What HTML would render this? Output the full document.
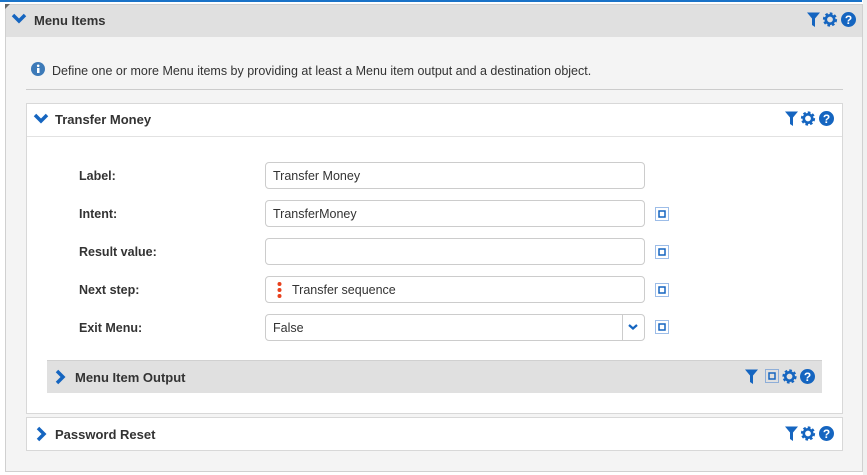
<!DOCTYPE html>
<html><head><meta charset="utf-8"><style>
*{box-sizing:border-box;margin:0;padding:0}
body{width:867px;height:475px;background:#fff;font-family:"Liberation Sans",sans-serif;position:relative;overflow:hidden;color:#333}
.a{position:absolute}
.lbl{position:absolute;left:79px;font-size:12.5px;font-weight:bold;color:#333}
.inp{position:absolute;left:265px;width:380px;height:27px;border:1px solid #ccc;border-radius:4px;background:#fff;font-size:12.5px;padding:6px 0 0 7px;color:#333}
.ico{position:absolute}
.hd{font-size:13px;font-weight:bold;color:#333;position:absolute}
</style></head><body>
<div class="a" style="left:0;top:0;width:862px;height:2px;background:#1a73c8"></div>
<div class="a" style="left:863px;top:0;width:4px;height:475px;background:#f0f0f0"></div>
<div class="a" style="left:5px;top:4px;width:858px;height:468px;border:1px solid #d0d0d0;background:#f4f4f4"></div>
<div class="a" style="left:6px;top:5px;width:856px;height:32px;background:#e0e0e0"></div>
<div class="a" style="left:5px;top:4px;width:0;height:0;border-top:5px solid #666;border-right:5px solid transparent"></div>
<svg class="ico" style="left:11px;top:13px" width="16" height="11" viewBox="0 0 16 11"><path d="M2 2 L8 8 L14 2" stroke="#1565c0" stroke-width="3.5" fill="none"/></svg>
<div class="hd" style="left:34px;top:13px">Menu Items</div>
<svg class="ico" style="left:807px;top:11px" width="50" height="17" viewBox="0 0 50 17"><path d="M0 1.5h13l-5 6v8.5l-3-2V7.5z" fill="#1565c0"/><g transform="translate(23 8.5)"><circle r="5.3" fill="none" stroke="#1565c0" stroke-width="3.6" stroke-dasharray="2.3 1.8"/><circle r="4.2" fill="none" stroke="#1565c0" stroke-width="2.6"/></g><circle cx="41.5" cy="8.5" r="7.5" fill="#1565c0"/><text x="41.5" y="12.8" font-size="12" font-weight="bold" fill="#fff" text-anchor="middle" font-family="Liberation Sans">?</text></svg>
<svg class="ico" style="left:31px;top:62px" width="14" height="14"><circle cx="7" cy="7" r="7" fill="#3d7ab8"/><rect x="6" y="6" width="2.5" height="5" fill="#fff"/><circle cx="7.2" cy="3.8" r="1.3" fill="#fff"/></svg>
<div class="a" style="left:52px;top:64px;font-size:12.5px;color:#333">Define one or more Menu items by providing at least a Menu item output and a destination object.</div>
<div class="a" style="left:26px;top:89px;width:817px;height:1px;background:#ccc"></div>
<div class="a" style="left:26px;top:103px;width:817px;height:311px;border:1px solid #d8d8d8;background:#fff"></div>
<div class="a" style="left:27px;top:136px;width:815px;height:1px;background:#e2e2e2"></div>
<svg class="ico" style="left:33px;top:113px" width="16" height="11" viewBox="0 0 16 11"><path d="M2 2 L8 8 L14 2" stroke="#1565c0" stroke-width="3.5" fill="none"/></svg>
<div class="hd" style="left:55px;top:112px">Transfer Money</div>
<svg class="ico" style="left:785px;top:110px" width="50" height="17" viewBox="0 0 50 17"><path d="M0 1.5h13l-5 6v8.5l-3-2V7.5z" fill="#1565c0"/><g transform="translate(23 8.5)"><circle r="5.3" fill="none" stroke="#1565c0" stroke-width="3.6" stroke-dasharray="2.3 1.8"/><circle r="4.2" fill="none" stroke="#1565c0" stroke-width="2.6"/></g><circle cx="41.5" cy="8.5" r="7.5" fill="#1565c0"/><text x="41.5" y="12.8" font-size="12" font-weight="bold" fill="#fff" text-anchor="middle" font-family="Liberation Sans">?</text></svg>
<div class="lbl" style="top:169px">Label:</div>
<div class="lbl" style="top:207px">Intent:</div>
<div class="lbl" style="top:245px">Result value:</div>
<div class="lbl" style="top:283px">Next step:</div>
<div class="lbl" style="top:321px">Exit Menu:</div>
<div class="inp" style="top:162px">Transfer Money</div>
<div class="inp" style="top:200px">TransferMoney</div>
<div class="inp" style="top:238px"></div>
<div class="inp" style="top:276px;padding-left:26px">Transfer sequence</div>
<svg class="ico" style="left:277px;top:282px" width="5" height="16"><circle cx="2.5" cy="2" r="2" fill="#e8401c"/><circle cx="2.5" cy="8" r="2" fill="#e8401c"/><circle cx="2.5" cy="14" r="2" fill="#e8401c"/></svg>
<div class="inp" style="top:314px">False</div>
<div class="a" style="left:622px;top:315px;width:1px;height:25px;background:#ccc"></div>
<svg class="ico" style="left:627px;top:323px" width="12" height="8"><path d="M2 2l4 3.5 4-3.5" stroke="#1565c0" stroke-width="2.2" fill="none"/></svg>
<svg class="ico" style="left:655px;top:207px" width="14" height="14"><rect x="0.5" y="0.5" width="13" height="13" fill="none" stroke="#3b7bd0" stroke-dasharray="1 1"/><rect x="4" y="4" width="6" height="6" fill="none" stroke="#1565c0" stroke-width="1.5"/></svg>
<svg class="ico" style="left:655px;top:245px" width="14" height="14"><rect x="0.5" y="0.5" width="13" height="13" fill="none" stroke="#3b7bd0" stroke-dasharray="1 1"/><rect x="4" y="4" width="6" height="6" fill="none" stroke="#1565c0" stroke-width="1.5"/></svg>
<svg class="ico" style="left:655px;top:283px" width="14" height="14"><rect x="0.5" y="0.5" width="13" height="13" fill="none" stroke="#3b7bd0" stroke-dasharray="1 1"/><rect x="4" y="4" width="6" height="6" fill="none" stroke="#1565c0" stroke-width="1.5"/></svg>
<svg class="ico" style="left:655px;top:320px" width="14" height="14"><rect x="0.5" y="0.5" width="13" height="13" fill="none" stroke="#3b7bd0" stroke-dasharray="1 1"/><rect x="4" y="4" width="6" height="6" fill="none" stroke="#1565c0" stroke-width="1.5"/></svg>
<div class="a" style="left:47px;top:360px;width:775px;height:33px;background:#e0e0e0;border-top:1px solid #d0d0d0"></div>
<svg class="ico" style="left:55px;top:369px" width="11" height="16" viewBox="0 0 11 16"><path d="M2 2 L8 8 L2 14" stroke="#1565c0" stroke-width="3.5" fill="none"/></svg>
<div class="hd" style="left:75px;top:370px">Menu Item Output</div>
<svg class="ico" style="left:745px;top:368px" width="72" height="17" viewBox="0 0 72 17"><path d="M0 1.5h13l-5 6v8.5l-3-2V7.5z" fill="#1565c0"/><rect x="20.5" y="1.5" width="13" height="13" fill="none" stroke="#3b7bd0" stroke-dasharray="1 1"/><rect x="24" y="5" width="6" height="6" fill="none" stroke="#1565c0" stroke-width="1.5"/><g transform="translate(44.5 8.5)"><circle r="5.3" fill="none" stroke="#1565c0" stroke-width="3.6" stroke-dasharray="2.3 1.8"/><circle r="4.2" fill="none" stroke="#1565c0" stroke-width="2.6"/></g><circle cx="62.5" cy="8.5" r="7.5" fill="#1565c0"/><text x="62.5" y="12.8" font-size="12" font-weight="bold" fill="#fff" text-anchor="middle" font-family="Liberation Sans">?</text></svg>
<div class="a" style="left:26px;top:417px;width:817px;height:34px;border:1px solid #d8d8d8;background:#fff"></div>
<svg class="ico" style="left:36px;top:426px" width="11" height="16" viewBox="0 0 11 16"><path d="M2 2 L8 8 L2 14" stroke="#1565c0" stroke-width="3.5" fill="none"/></svg>
<div class="hd" style="left:55px;top:427px">Password Reset</div>
<svg class="ico" style="left:785px;top:425px" width="50" height="17" viewBox="0 0 50 17"><path d="M0 1.5h13l-5 6v8.5l-3-2V7.5z" fill="#1565c0"/><g transform="translate(23 8.5)"><circle r="5.3" fill="none" stroke="#1565c0" stroke-width="3.6" stroke-dasharray="2.3 1.8"/><circle r="4.2" fill="none" stroke="#1565c0" stroke-width="2.6"/></g><circle cx="41.5" cy="8.5" r="7.5" fill="#1565c0"/><text x="41.5" y="12.8" font-size="12" font-weight="bold" fill="#fff" text-anchor="middle" font-family="Liberation Sans">?</text></svg>
</body></html>
